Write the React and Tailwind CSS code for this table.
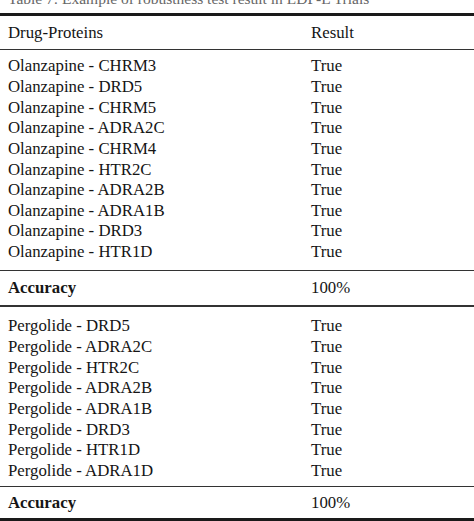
import React from "react";

const g1 = ["CHRM3","DRD5","CHRM5","ADRA2C","CHRM4","HTR2C","ADRA2B","ADRA1B","DRD3","HTR1D"];
const g2 = ["DRD5","ADRA2C","HTR2C","ADRA2B","ADRA1B","DRD3","HTR1D","ADRA1D"];

function Row({ left, right }) {
  return (
    <div className="flex h-[20.67px] items-center">
      <div className="w-[311px] pl-[8px]">{left}</div>
      <div>{right}</div>
    </div>
  );
}

export default function App() {
  return (
    <div className="w-[474px] h-[521px] overflow-hidden bg-white text-[#151515] text-[16.8px] font-['Liberation_Serif','Times_New_Roman',serif]">
      <div className="h-[13px] overflow-hidden">
        <div className="-mt-[9px] pl-[8px] text-[15.5px] leading-[16px] text-[#666] whitespace-nowrap">
          Table 7: Example of robustness test result in LDP-L Trials
        </div>
      </div>
      <div className="border-t-[3px] border-[#1a1a1a]" />
      <div className="flex h-[33px] items-center">
        <div className="w-[311px] pl-[8px]">Drug-Proteins</div>
        <div>Result</div>
      </div>
      <div className="border-t border-[#333]" />
      <div className="pt-[5.5px] pb-[8px]">
        {g1.map((p) => (
          <Row key={p} left={`Olanzapine - ${p}`} right="True" />
        ))}
      </div>
      <div className="border-t border-[#333]" />
      <div className="flex h-[34px] items-center">
        <div className="w-[311px] pl-[8px] font-bold">Accuracy</div>
        <div>100%</div>
      </div>
      <div className="border-t-2 border-[#333]" />
      <div className="pt-[8.7px] pb-[5px]">
        {g2.map((p) => (
          <Row key={p} left={`Pergolide - ${p}`} right="True" />
        ))}
      </div>
      <div className="border-t border-[#333]" />
      <div className="flex h-[31px] items-center">
        <div className="w-[311px] pl-[8px] font-bold">Accuracy</div>
        <div>100%</div>
      </div>
      <div className="border-t-[3px] border-[#1a1a1a]" />
    </div>
  );
}
